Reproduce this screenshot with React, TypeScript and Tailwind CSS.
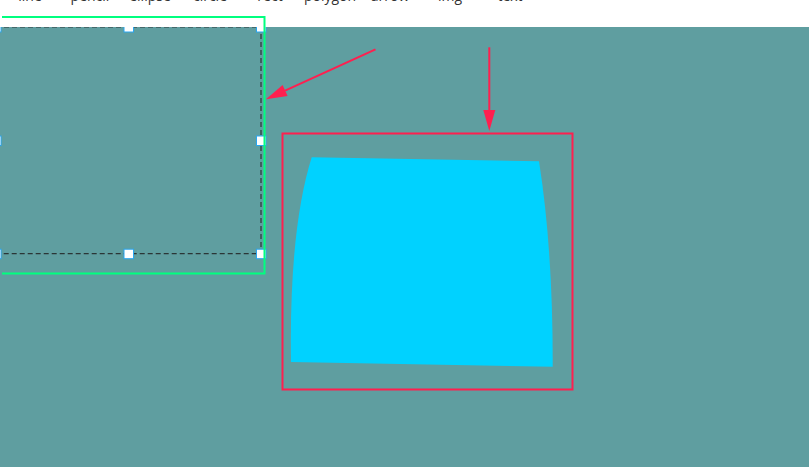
import React from "react";

const tools = ["line", "pencil", "ellipse", "circle", "rect", "polygon", "arrow", "img", "text"];

// selection handles of the active object (fabric-style controls)
const handles: [number, number][] = [
  [-4, 27], [128.5, 27], [261, 27],
  [-4, 140.5], [261, 140.5],
  [-4, 253.7], [128.5, 253.7], [261, 253.7],
];

function Arrow({ x1, y1, x2, y2 }: { x1: number; y1: number; x2: number; y2: number }) {
  const a = Math.atan2(y2 - y1, x2 - x1);
  const len = 21;
  const half = 6;
  const bx = x2 - Math.cos(a) * len;
  const by = y2 - Math.sin(a) * len;
  const px = -Math.sin(a) * half;
  const py = Math.cos(a) * half;
  return (
    <g>
      <line x1={x1} y1={y1} x2={bx} y2={by} stroke="#ff1f4f" strokeWidth={2} />
      <polygon points={`${x2},${y2} ${bx + px},${by + py} ${bx - px},${by - py}`} fill="#ff1f4f" />
    </g>
  );
}

export default function App() {
  return (
    <div className="relative w-full h-[467px] overflow-hidden flex flex-col" style={{ fontFamily: '"Open Sans", "Noto Sans", sans-serif' }}>
      <div className="h-[27px] bg-white flex items-start shrink-0">
        {tools.map((t) => (
          <button key={t} className="w-[60px] text-center text-[14px] leading-[20px] text-[#333] -mt-[14px]">
            {t}
          </button>
        ))}
      </div>
      <div className="flex-1 bg-[#5f9ea0]" />

      <svg className="absolute inset-0 pointer-events-none" width={809} height={467} viewBox="0 0 809 467">
        <defs>
          <clipPath id="canvasClip">
            <rect x={0} y={27} width={809} height={440} />
          </clipPath>
        </defs>
        <g clipPath="url(#canvasClip)">
          {/* selected object */}
          <rect x={-4} y={27} width={265} height={226.7} fill="none" stroke="#2b3536" strokeWidth={1.2} strokeDasharray="5 3" />
          {handles.map(([x, y], i) => (
            <rect key={i} x={x - 4.5} y={y - 4.5} width={9.5} height={9.5} fill="#fff" stroke="#2aa6f0" strokeWidth={1} />
          ))}

          <Arrow x1={375.5} y1={49.3} x2={266} y2={99.3} />
          <Arrow x1={489.3} y1={47.3} x2={489.3} y2={131} />

          <rect x={282.5} y={133.5} width={290} height={256} fill="none" stroke="#ff1f4f" strokeWidth={2} />

          <path
            d="M311.7 157.3 L539 161.3 Q553 250 552.7 366.7 L291 362 Q289 230 311.7 157.3 Z"
            fill="#00d2ff"
          />
        </g>
        {/* hover outline */}
        <path d="M2 17 H264.5 V273.5 H2" fill="none" stroke="#00ff7f" strokeWidth={2} />
      </svg>
    </div>
  );
}
